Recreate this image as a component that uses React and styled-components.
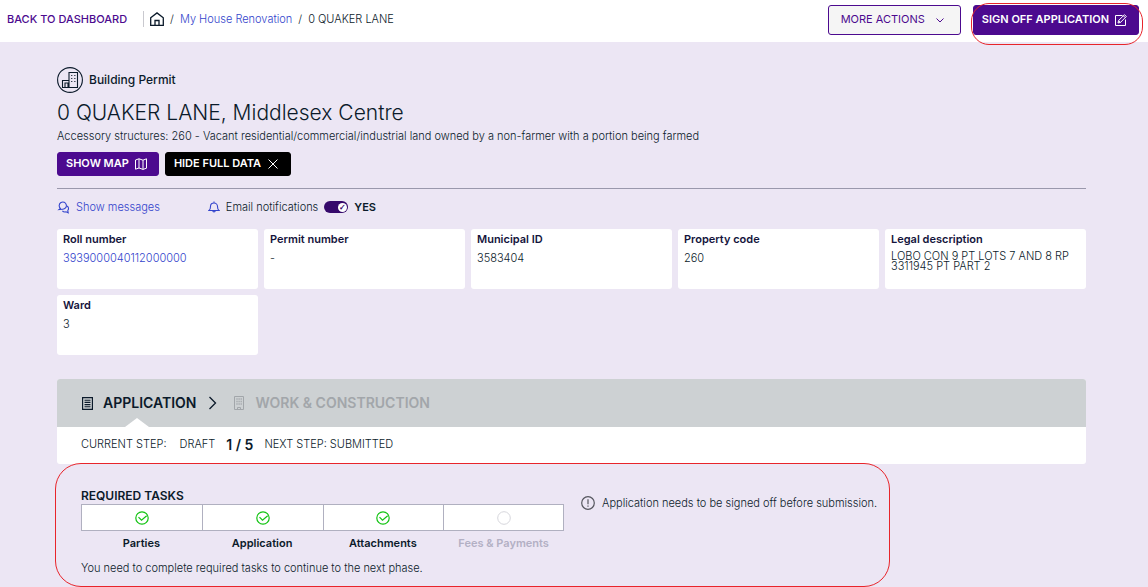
import React, { useState } from "react";
import styled, { createGlobalStyle } from "styled-components";

const GlobalStyle = createGlobalStyle`
  * {
    box-sizing: border-box;
  }

  body {
    margin: 0;
    background-color: #ece6f4;
    color: #0b1a2a;
    font-family: Inter, "Liberation Sans", sans-serif;
    font-size: 11px;
    font-weight: 300;
    line-height: 16px;
  }

  a {
    color: #3344cc;
    text-decoration: none;
  }

  button {
    font-family: inherit;
    cursor: pointer;
  }

  svg {
    display: block;
    flex: none;
  }

  h1, h2, p, ul, ol, dl, dd {
    margin: 0;
    padding: 0;
    list-style: none;
  }
`;

const TopBar = styled.header`
  display: flex;
  align-items: flex-start;
  justify-content: space-between;
  height: 42px;
  padding: 5px 9px 0 7px;
  background-color: #ffffff;
`;

const Crumbs = styled.nav`
  display: flex;
  align-items: center;
  height: 28px;
  gap: 6px;
  white-space: nowrap;
`;

const BackLink = styled.a`
  margin-right: 10px;
  color: #4c0a8f;
  font-weight: 500;
`;

const HomeLink = styled.a`
  display: flex;
  align-items: center;
  height: 16px;
  padding-left: 6px;
  border-left: 1px solid #c9c9cf;
  color: #0b1a2a;
`;

const Crumb = styled.span`
  color: #0b1a2a;
`;

const Actions = styled.div`
  display: flex;
  gap: 12px;
`;

const Button = styled.button`
  display: inline-flex;
  align-items: center;
  justify-content: space-between;
  height: ${({ $tall }) => ($tall ? "30px" : "24px")};
  padding: 0 11px 2px 8px;
  gap: 6px;
  border: 1px solid ${({ $color }) => $color};
  border-radius: 3px;
  background-color: ${({ $color }) => $color};
  color: #ffffff;
  font-size: 11px;
  font-weight: 600;
  line-height: 16px;
  white-space: nowrap;

  svg {
    margin-top: 2px;
  }
`;

const OutlineButton = styled(Button)`
  padding: 0 16px 2px 12px;
  gap: 11px;
  border-color: #4c0a8f;
  background-color: #f5f5f5;
  color: #4c0a8f;
  font-weight: 400;
`;

const Highlight = styled.div`
  position: relative;

  &::after {
    content: "";
    position: absolute;
    inset: -2px -4px -10px -2px;
    border: 1px solid #e8252b;
    border-radius: 18px;
    pointer-events: none;
  }
`;

const Page = styled.main`
  padding: 25px 62px 0 57px;
`;

const PermitType = styled.div`
  display: flex;
  align-items: center;
  gap: 6px;
  font-size: 12px;
  font-weight: 500;
`;

const Title = styled.h1`
  margin-top: 6px;
  font-size: 21px;
  font-weight: 300;
  line-height: 28px;
`;

const Subtitle = styled.p`
  margin-top: 1px;
`;

const ButtonRow = styled.div`
  display: flex;
  gap: 6px;
  padding: 8px 0 12px;
  border-bottom: 1px solid #9a98ac;
`;

const Options = styled.div`
  display: flex;
  align-items: center;
  gap: 48px;
  height: 40px;
  padding-bottom: 4px;
`;

const Option = styled.div`
  display: flex;
  align-items: center;
  gap: 6px;
`;

const MessagesLink = styled.a`
  display: flex;
  align-items: center;
  gap: 6px;
`;

const Switch = styled.label`
  display: flex;
  align-items: center;
  gap: 6px;
  cursor: pointer;
`;

const SwitchInput = styled.input`
  appearance: none;
  display: flex;
  align-items: center;
  justify-content: flex-end;
  width: 24px;
  height: 12px;
  margin: 0;
  padding: 0 1px;
  border-radius: 6px;
  background-color: #36096b;
  cursor: pointer;

  &::before {
    content: "✓";
    width: 9px;
    height: 9px;
    border-radius: 50%;
    background-color: #ffffff;
    color: #36096b;
    font-size: 8px;
    font-weight: 700;
    line-height: 9px;
    text-align: center;
  }

  &:not(:checked) {
    justify-content: flex-start;
    background-color: #8a8799;
  }
`;

const SwitchState = styled.span`
  font-weight: 600;
`;

const Cards = styled.dl`
  display: grid;
  grid-template-columns: repeat(5, 1fr);
  gap: 6px;
`;

const Card = styled.div`
  min-height: 60px;
  padding: 2px 6px;
  border-radius: 3px;
  background-color: #ffffff;
`;

const CardLabel = styled.dt`
  color: #14143c;
  font-weight: 600;
`;

const CardValue = styled.dd`
  padding-top: ${({ $dense }) => ($dense ? "4px" : "6px")};
  line-height: 10px;
`;

const Phases = styled.section`
  margin-top: 24px;
  border-radius: 3px;
  overflow: hidden;
  background-color: #ffffff;
`;

const PhaseBar = styled.ol`
  display: flex;
  align-items: center;
  gap: 10px;
  height: 48px;
  padding: 0 24px;
  background-color: #cdd1d3;
`;

const Phase = styled.li`
  position: relative;
  display: flex;
  align-items: center;
  gap: 9px;
  height: 100%;
  color: ${({ $active }) => ($active ? "#0b1a2a" : "#a2a6aa")};
  font-size: 14px;
  font-weight: 600;

  &::after {
    content: "";
    display: ${({ $active }) => ($active ? "block" : "none")};
    position: absolute;
    bottom: 0;
    left: calc(50% - 14px);
    border: solid transparent;
    border-width: 0 12px 9px;
    border-bottom-color: #ffffff;
  }
`;

const PhaseArrow = styled.li`
  margin-right: 2px;
`;

const StepRow = styled.div`
  display: flex;
  align-items: center;
  gap: 11px;
  height: 37px;
  padding: 0 24px 3px;
`;

const StepLabel = styled.span`
  margin-right: 2px;
`;

const StepCount = styled.strong`
  padding-top: 2px;
  color: #0b1a2a;
  font-size: 14px;
  font-weight: 600;
`;

const Tasks = styled.section`
  display: flex;
  gap: 17px;
  width: fit-content;
  min-height: 124px;
  margin: -1px 0 0 -2px;
  padding: 24px 12px 9px 25px;
  border: 1px solid #e8252b;
  border-radius: 26px;
`;

const TasksTitle = styled.h2`
  font-size: 12px;
  font-weight: 600;
  line-height: 16px;
`;

const TaskList = styled.ul`
  display: grid;
  grid-template-columns: repeat(4, 1fr);
  width: 483px;
`;

const Task = styled.li`
  color: ${({ $done }) => ($done ? "#0b1a2a" : "#b3b0c4")};
  font-weight: 600;
  text-align: center;
`;

const TaskBox = styled.div`
  display: flex;
  align-items: center;
  justify-content: center;
  height: 27px;
  margin-bottom: 4px;
  border: 1px solid #b0b0c0;
  border-right-width: 0;
  background-color: #ffffff;

  ${Task}:last-child & {
    border-right-width: 1px;
  }
`;

const TasksHint = styled.p`
  margin-top: 9px;
`;

const Notice = styled.p`
  display: flex;
  align-items: center;
  align-self: flex-start;
  gap: 7px;
  margin-top: 7px;

  svg {
    color: #55565e;
  }
`;

const Icon = ({ size = 14, box = 14, stroke = 1, children }) => (
  <svg
    width={size}
    height={size}
    viewBox={`0 0 ${box} ${box}`}
    fill="none"
    stroke="currentColor"
    strokeWidth={stroke}
    aria-hidden="true"
  >
    {children}
  </svg>
);

const HomeIcon = () => (
  <Icon stroke={1.3}>
    <path d="M.7 5.8 7 .9l6.3 4.9v7.500H.7z" />
    <path d="M5 13V8.500h4V13" />
  </Icon>
);

const ChevronDownIcon = () => (
  <Icon size={8} box={8}>
    <path d="m.5 2.500 3.500 3.500 3.500-3.500" />
  </Icon>
);

const EditIcon = () => (
  <Icon size={12} box={12}>
    <path d="M7.500 1.500h-7v10h10V5.500" />
    <path d="m3 9 .6-2.500L9.500.700l1.800 1.800-5.800 5.900zM8.400 1.800l1.800 1.800M3.600 6.500l1.900 1.900" />
  </Icon>
);

const BuildingIcon = () => (
  <Icon size={26} box={26} stroke={1.1}>
    <circle cx="13" cy="13" r="12.400" />
    <path d="M5.500 20.500v-7h6.500V5.500h8.500v15zM12 13.500v7M8 20.500v-4.500h3v4.500" />
    <path d="M14.200 8.500h1.100m2 0h1.100m-4.200 3h1.100m2 0h1.100m-4.200 3h1.100m2 0h1.100" />
  </Icon>
);

const MapIcon = () => (
  <Icon size={12} box={12}>
    <path d="M.5 2 4 .8l4 1.400L11.500.800v9.400L8 11.400 4 10 .5 11.200zM4 .8V10M8 2.200v9.200" />
  </Icon>
);

const CloseIcon = () => (
  <Icon size={12} box={12}>
    <path d="m1.500 1.500 9 9M10.500 1.500l-9 9" />
  </Icon>
);

const MessagesIcon = () => (
  <Icon size={13} box={13} stroke={1.1}>
    <path d="M3.400 7.300A3.600 3.600 0 1 1 5.500 8.200L2 8.600z" />
    <path d="M10 4.900a3 3 0 0 1 .8 4.600l.4 2.300-2.200-1a3.300 3.300 0 0 1-3.600-1" />
  </Icon>
);

const BellIcon = () => (
  <Icon size={12} box={12} stroke={1.1}>
    <path d="M1 9.500h10C9.800 8.700 9.500 7.500 9.500 5.500a3.500 3.500 0 0 0-7 0C2.500 7.500 2.200 8.700 1 9.500zM6 .6V2M4.800 9.700a1.200 1.200 0 0 0 2.400 0" />
  </Icon>
);

const DocumentIcon = () => (
  <Icon size={13} box={14} stroke={1.3}>
    <path d="M1.700.700h10.600v12.600H1.700zM3.800 3.500h6.400M3.800 5.800h6.400M3.800 8.200h6.400M3.800 10.500h6.400" />
  </Icon>
);

const ChevronRightIcon = () => (
  <Icon stroke={1.3}>
    <path d="m3.500 1 6 6-6 6" />
  </Icon>
);

const TowerIcon = () => (
  <Icon>
    <path d="M2.500.5h9v13h-9zM5.500 13.500v-2h3v2" />
    <path d="M4.400 3h6M4.400 5.500h6M4.400 8h6" strokeWidth="1.300" strokeDasharray="1.200 .9" />
  </Icon>
);

const DoneIcon = () => (
  <Icon stroke={1.2}>
    <g stroke="#12c312">
      <circle cx="7" cy="7" r="6.200" />
      <path d="m3.500 6.200 3 3 5.200-4.500" />
    </g>
  </Icon>
);

const PendingIcon = () => (
  <Icon>
    <circle cx="7" cy="7" r="6.300" stroke="#d6d6dc" />
  </Icon>
);

const InfoIcon = () => (
  <Icon stroke={1.2}>
    <circle cx="7" cy="7" r="6.300" />
    <path d="M7 3.200v5M7 9.500v1.300" />
  </Icon>
);

const fields = [
  { label: "Roll number", value: "3939000040112000000", link: true },
  { label: "Permit number", value: "-" },
  { label: "Municipal ID", value: "3583404" },
  { label: "Property code", value: "260" },
  {
    label: "Legal description",
    value: "LOBO CON 9 PT LOTS 7 AND 8 RP 3311945 PT PART 2",
    dense: true,
  },
  { label: "Ward", value: "3" },
];

const tasks = [
  { name: "Parties", done: true },
  { name: "Application", done: true },
  { name: "Attachments", done: true },
  { name: "Fees & Payments", done: false },
];

const App = () => {
  const [notify, setNotify] = useState(true);

  return (
    <>
      <GlobalStyle />
      <TopBar>
        <Crumbs>
          <BackLink href="#">BACK TO DASHBOARD</BackLink>
          <HomeLink href="#" aria-label="Home">
            <HomeIcon />
          </HomeLink>
          <Crumb>/</Crumb>
          <a href="#">My House Renovation</a>
          <Crumb>/</Crumb>
          <Crumb>0 QUAKER LANE</Crumb>
        </Crumbs>
        <Actions>
          <OutlineButton type="button" $tall>
            MORE ACTIONS
            <ChevronDownIcon />
          </OutlineButton>
          <Highlight>
            <Button type="button" $tall $color="#4c0a8f">
              SIGN OFF APPLICATION
              <EditIcon />
            </Button>
          </Highlight>
        </Actions>
      </TopBar>

      <Page>
        <PermitType>
          <BuildingIcon />
          Building Permit
        </PermitType>
        <Title>0 QUAKER LANE, Middlesex Centre</Title>
        <Subtitle>
          Accessory structures: 260 - Vacant residential/commercial/industrial
          land owned by a non-farmer with a portion being farmed
        </Subtitle>
        <ButtonRow>
          <Button type="button" $color="#4c0a8f">
            SHOW MAP
            <MapIcon />
          </Button>
          <Button type="button" $color="#000000">
            HIDE FULL DATA
            <CloseIcon />
          </Button>
        </ButtonRow>

        <Options>
          <MessagesLink href="#">
            <MessagesIcon />
            Show messages
          </MessagesLink>
          <Option>
            <a href="#" aria-label="Notifications">
              <BellIcon />
            </a>
            <Switch>
              Email notifications
              <SwitchInput
                type="checkbox"
                checked={notify}
                onChange={() => setNotify(!notify)}
              />
              <SwitchState>{notify ? "YES" : "NO"}</SwitchState>
            </Switch>
          </Option>
        </Options>

        <Cards>
          {fields.map(({ label, value, link, dense }) => (
            <Card key={label}>
              <CardLabel>{label}</CardLabel>
              <CardValue $dense={dense}>
                {link ? <a href="#">{value}</a> : value}
              </CardValue>
            </Card>
          ))}
        </Cards>

        <Phases>
          <PhaseBar>
            <Phase $active>
              <DocumentIcon />
              APPLICATION
            </Phase>
            <PhaseArrow>
              <ChevronRightIcon />
            </PhaseArrow>
            <Phase>
              <TowerIcon />
              WORK &amp; CONSTRUCTION
            </Phase>
          </PhaseBar>
          <StepRow>
            <StepLabel>CURRENT STEP:</StepLabel>
            <span>DRAFT</span>
            <StepCount>1 / 5</StepCount>
            <span>NEXT STEP: SUBMITTED</span>
          </StepRow>
        </Phases>

        <Tasks>
          <div>
            <TasksTitle>REQUIRED TASKS</TasksTitle>
            <TaskList>
              {tasks.map(({ name, done }) => (
                <Task key={name} $done={done}>
                  <TaskBox>{done ? <DoneIcon /> : <PendingIcon />}</TaskBox>
                  {name}
                </Task>
              ))}
            </TaskList>
            <TasksHint>
              You need to complete required tasks to continue to the next phase.
            </TasksHint>
          </div>
          <Notice>
            <InfoIcon />
            Application needs to be signed off before submission.
          </Notice>
        </Tasks>
      </Page>
    </>
  );
};

export default App;
